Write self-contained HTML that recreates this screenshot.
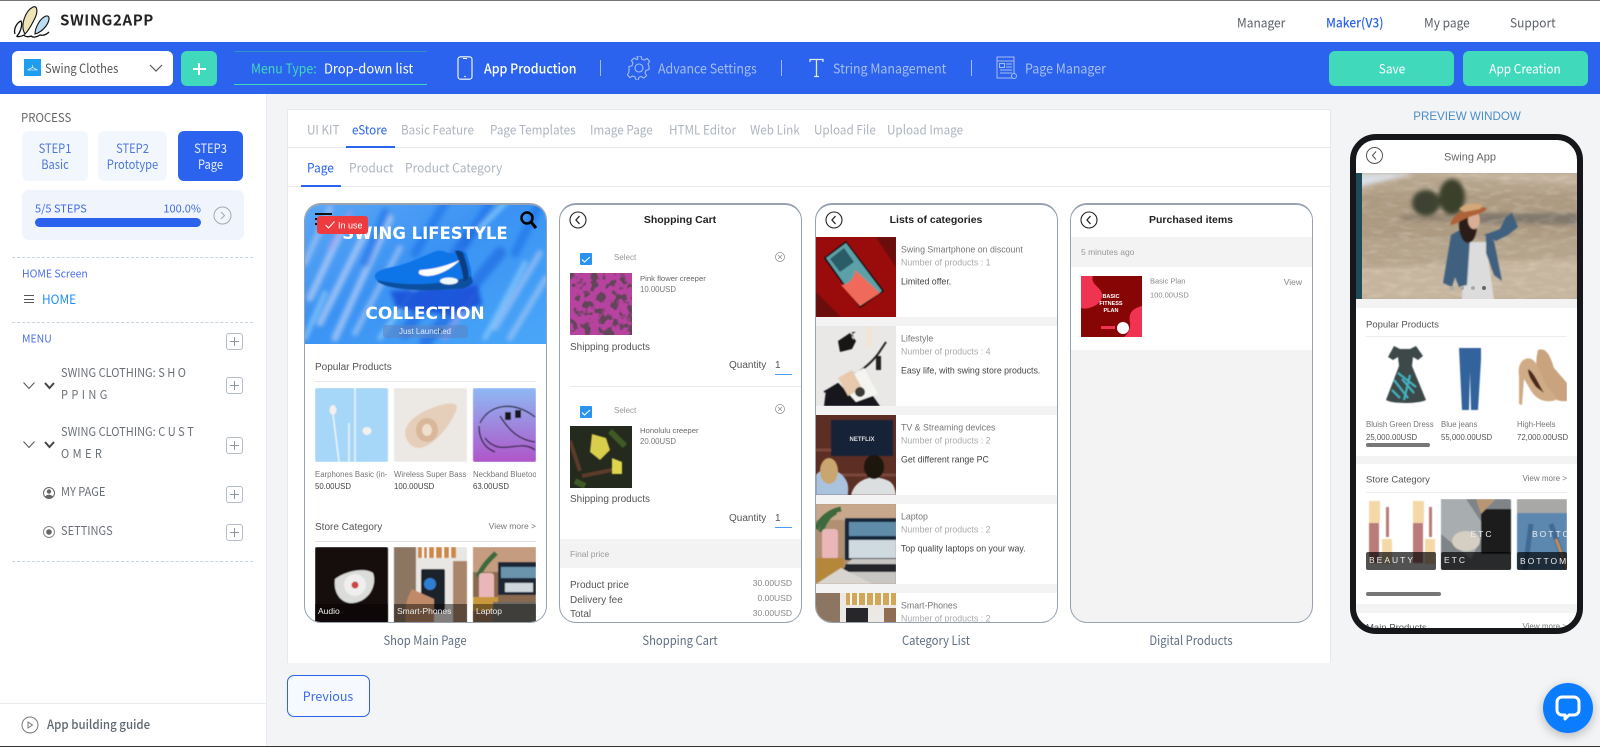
<!DOCTYPE html>
<html><head><meta charset="utf-8"><title>Swing2App</title>
<style>
*{box-sizing:border-box}
html,body{margin:0;padding:0;width:1600px;height:747px;overflow:hidden;background:#f3f4f6}
body{font-family:"Noto Sans CJK KR","Liberation Sans",sans-serif;position:relative}
.a{position:absolute}
.t{position:absolute;white-space:nowrap;transform:translateY(-50%);line-height:1}
.c{position:absolute;white-space:nowrap;transform:translate(-50%,-50%);line-height:1}
.r{position:absolute;white-space:nowrap;transform:translate(-100%,-50%);line-height:1}
.l{font-family:"Liberation Sans",sans-serif}
.sx{transform:translateY(-50%) scaleX(.91);transform-origin:0 50%}
.cx{transform:translate(-50%,-50%) scaleX(.91)}
.card{position:absolute;top:203px;height:420px;width:243px;border:1px solid #97a1b1;border-radius:17px;overflow:hidden;background:#fff;border-top-width:2px}
.in{position:absolute;top:-205px}
.plus{position:absolute;left:226px;width:17px;height:17px;border:1px solid #b4bcc8;border-radius:3px}
.plus:before{content:"";position:absolute;left:3px;right:3px;top:7px;height:1px;background:#8c96a3}
.plus:after{content:"";position:absolute;top:3px;bottom:3px;left:7px;width:1px;background:#8c96a3}
.side{font-size:12px;color:#6b7078;transform:translateY(-50%) scaleX(.92);transform-origin:0 50%}
.step{position:absolute;top:131px;height:50px;background:#f2f6fd;border-radius:6px;color:#4d78dc;font-size:12.5px;text-align:center;line-height:16px;padding-top:9px}
.step span{display:block;transform:scaleX(.89)}
.tab{font-size:13px;color:#aeb5c0;top:129px;transform:translateY(-50%) scaleX(.9);transform-origin:0 50%}
.tab2{font-size:13px;color:#aeb5c0;top:167px;transform:translateY(-50%) scaleX(.92);transform-origin:0 50%}
.nav{font-size:13px;color:#5b6068;top:22px;transform:translateY(-50%) scaleX(.92);transform-origin:0 50%}
.hn{font-size:13.5px;top:68px;color:#a6bdf0;transform:translateY(-50%) scaleX(.92);transform-origin:0 50%}
.cap{font-size:12.5px;color:#5f6f82;top:640px;transform:translate(-50%,-50%) scaleX(.9)}
</style></head><body>
<svg class="a" style="left:0;top:0" width="0" height="0">
<defs>
<filter id="s" x="-5%" y="-5%" width="110%" height="110%"><feGaussianBlur stdDeviation=".55"/></filter>
<filter id="b1" x="-10%" y="-10%" width="120%" height="120%"><feGaussianBlur stdDeviation="2.200"/></filter>
<filter id="b3"><feGaussianBlur stdDeviation="2"/></filter>
<filter id="b4"><feGaussianBlur stdDeviation=".7"/></filter>
<filter id="npink" x="0" y="0" width="100%" height="100%"><feTurbulence type="fractalNoise" baseFrequency=".14" numOctaves="2" seed="4"/><feColorMatrix values="0 0 0 0 .12  0 0 0 0 .06  0 0 0 0 .1  6 0 0 0 -2.900"/></filter>
<filter id="ngrass" x="0" y="0" width="100%" height="100%"><feTurbulence type="fractalNoise" baseFrequency=".07 .22" numOctaves="2" seed="7"/><feColorMatrix values="0 0 0 0 .9  0 0 0 0 .85  0 0 0 0 .77  2 0 0 0 -.9"/><feGaussianBlur stdDeviation=".6"/></filter>
<linearGradient id="h" x1="0" y1="0" x2="1" y2="1"><stop offset="0" stop-color="#5ba6f5"/><stop offset=".45" stop-color="#3b92f3"/><stop offset="1" stop-color="#49a7f8"/></linearGradient>
<linearGradient id="pp" x1="0" y1="0" x2="0" y2="1"><stop offset="0" stop-color="#8eb9f3"/><stop offset="1" stop-color="#b055c9"/></linearGradient>
</defs>
</svg>

<!-- top bar -->
<div class="a" style="left:0;top:0;width:1600px;height:42px;background:#fff;border-top:1px solid #777"></div>
<svg class="a" style="left:12px;top:4px" width="42" height="34" viewBox="0 0 42 34">
<path d="M13 30C8 22 13 7 21 3c5-2 5 6 1 13-3 6-7 12-9 14z" fill="#eee4b8" stroke="#111" stroke-width="1.100"/>
<path d="M23 30c0-6 5-16 11-18 5-1 3 6 0 10-3 4-7 7-11 8z" fill="#bcdcf2" stroke="#111" stroke-width="1.100"/>
<path d="M3 30c-2-6 3-12 6-13 2 4-1 12-4 15-1 1 4 1 7-1 1 2 5 2 7 1 2 2 6 1 9-1 4 1 7-1 9-3" fill="none" stroke="#111" stroke-width="1.300"/>
</svg>
<div class="t" style="left:60px;top:20px;font-size:15px;font-weight:700;color:#222;letter-spacing:.6px">SWING2APP</div>
<div class="t nav" style="left:1237px">Manager</div>
<div class="t nav" style="left:1326px;color:#2c63ee;font-weight:500">Maker(V3)</div>
<div class="t nav" style="left:1424px">My page</div>
<div class="t nav" style="left:1510px">Support</div>

<!-- blue bar -->
<div class="a" style="left:0;top:42px;width:1600px;height:52px;background:#2c63ee"></div>
<div class="a" style="left:12px;top:51px;width:161px;height:35px;background:#fff;border-radius:6px"></div>
<div class="a" style="left:24px;top:59px;width:17px;height:17px;background:#1f9df0"></div>
<svg class="a" style="left:27px;top:63px" width="11" height="8"><path d="M.500 7L5.500 4.500 10.500 7zM5.500 4.500V2" fill="none" stroke="#cfeafd" stroke-width=".8"/></svg>
<div class="t sx" style="left:45px;top:68px;font-size:12.500px;color:#555;transform:translateY(-50%) scaleX(.89)">Swing Clothes</div>
<svg class="a" style="left:149px;top:63px" width="14" height="10"><path d="M1 2l6 6 6-6" fill="none" stroke="#555" stroke-width="1.200"/></svg>
<div class="a" style="left:181px;top:51px;width:36px;height:35px;background:#41d9bb;border-radius:6px"></div>
<div class="a" style="left:193px;top:68px;width:13px;height:2px;background:#fff"></div>
<div class="a" style="left:198px;top:63px;width:2px;height:12px;background:#fff"></div>
<div class="a" style="left:234px;top:51px;width:193px;height:1px;background:#2f93c9"></div>
<div class="a" style="left:234px;top:84px;width:193px;height:1px;background:#41d9bb"></div>
<div class="t sx" style="left:251px;top:68px;font-size:13.500px;color:#41d9bb">Menu Type:</div>
<div class="t sx" style="left:324px;top:68px;font-size:13.500px;color:#fff;transform:translateY(-50%) scaleX(.96)">Drop-down list</div>
<svg class="a" style="left:457px;top:56px" width="16" height="24"><rect x="1" y=".8" width="14" height="22.400" rx="2.500" fill="none" stroke="#fff" stroke-width="1.100"/><path d="M6 2.500h4" stroke="#fff"/><circle cx="8" cy="20.500" r=".8" fill="#fff"/></svg>
<div class="t hn" style="left:484px;color:#fff;font-weight:500">App Production</div>
<div class="a" style="left:600px;top:60px;width:1px;height:16px;background:#a6bdf0"></div>
<svg class="a" style="left:627px;top:56px" width="24" height="24" viewBox="0 0 24 24"><path d="M10 1h4l.7 3 2.600 1.100 2.700-1.600 2.600 2.700-1.600 2.600L22 11.500v3l-3 .8-1 2.600 1.600 2.600-2.800 2.600-2.600-1.600-2.200.8-.9 2.700h-2l-1-3-2.600-1-2.600 1.600-2.600-2.700 1.600-2.600L2 14.500v-3l3-.7 1-2.600-1.500-2.600 2.600-2.600 2.600 1.500 1-.4z" transform="translate(0 -1)" fill="none" stroke="#a6bdf0" stroke-width="1.100"/><circle cx="12" cy="12" r="4" fill="none" stroke="#a6bdf0" stroke-width="1.100"/></svg>
<div class="t hn" style="left:658px">Advance Settings</div>
<div class="a" style="left:781px;top:60px;width:1px;height:16px;background:#a6bdf0"></div>
<svg class="a" style="left:809px;top:58px" width="15" height="20"><path d="M1 4V1.500h13V4M7.500 1.500V18M5 18.500h5" fill="none" stroke="#dfe7fb" stroke-width="1.300"/></svg>
<div class="t hn" style="left:833px">String Management</div>
<div class="a" style="left:971px;top:60px;width:1px;height:16px;background:#a6bdf0"></div>
<svg class="a" style="left:996px;top:56px" width="22" height="24"><path d="M1 1h17v21H1zM1 5h17" fill="none" stroke="#a6bdf0"/><rect x="3.500" y="7.500" width="5" height="4" fill="none" stroke="#a6bdf0"/><path d="M10 8h6M10 11h6M4 14h12M4 17h12" stroke="#a6bdf0"/><circle cx="18" cy="20" r="2.500" fill="#2c63ee" stroke="#a6bdf0"/></svg>
<div class="t hn" style="left:1025px">Page Manager</div>
<div class="a" style="left:1329px;top:51px;width:125px;height:35px;background:#41d9bb;border-radius:6px"></div>
<div class="c cx" style="left:1392px;top:68px;font-size:13px;color:#fff">Save</div>
<div class="a" style="left:1463px;top:51px;width:125px;height:35px;background:#41d9bb;border-radius:6px"></div>
<div class="c cx" style="left:1525px;top:68px;font-size:13px;color:#fff">App Creation</div>

<!-- sidebar -->
<div class="a" style="left:0;top:94px;width:267px;height:652px;background:#fff;border-right:1px solid #e9ebef"></div>
<div class="t" style="left:21px;top:118px;font-size:12px;color:#666;transform:translateY(-50%) scaleX(.95);transform-origin:0 50%">PROCESS</div>
<div class="step" style="left:22px;width:66px"><span>STEP1</span><span>Basic</span></div>
<div class="step" style="left:98px;width:69px"><span>STEP2</span><span>Prototype</span></div>
<div class="step" style="left:178px;width:65px;background:#2c63ee;color:#e8eefc"><span>STEP3</span><span>Page</span></div>
<div class="a" style="left:22px;top:190px;width:222px;height:50px;background:#f0f4fd;border-radius:7px"></div>
<div class="t" style="left:35px;top:209px;font-size:11px;color:#3f6be0">5/5 STEPS</div>
<div class="r" style="left:201px;top:209px;font-size:11px;color:#3f6be0">100.0%</div>
<div class="a" style="left:35px;top:218px;width:166px;height:9px;background:#2c63ee;border-radius:5px"></div>
<svg class="a" style="left:213px;top:206px" width="19" height="19"><circle cx="9.500" cy="9.500" r="8.500" fill="none" stroke="#a3a9b3"/><path d="M8 6l3.500 3.500L8 13" fill="none" stroke="#a3a9b3"/></svg>
<div class="a" style="left:12px;top:257px;width:241px;border-top:1px dashed #c8d3e6"></div>
<div class="t" style="left:22px;top:274px;font-size:11px;color:#4d6df0;transform:translateY(-50%) scaleX(.95);transform-origin:0 50%">HOME Screen</div>
<div class="a" style="left:24px;top:295px;width:10px;height:8px;border-top:1px solid #555;border-bottom:1px solid #555"></div>
<div class="a" style="left:24px;top:299px;width:10px;height:1px;background:#555"></div>
<div class="t" style="left:42px;top:299px;font-size:12.500px;color:#1e90ff;transform:translateY(-50%) scaleX(.95);transform-origin:0 50%">HOME</div>
<div class="a" style="left:12px;top:322px;width:241px;border-top:1px dashed #c8d3e6"></div>
<div class="t" style="left:22px;top:339px;font-size:11px;color:#4d6df0;transform:translateY(-50%) scaleX(.95);transform-origin:0 50%">MENU</div>
<div class="plus" style="top:333px"></div>
<div class="t side" style="left:61px;top:373px">SWING CLOTHING: S H O</div>
<div class="t side" style="left:61px;top:395px;letter-spacing:.5px">P P I N G</div>
<svg class="a" style="left:23px;top:381px" width="34" height="10"><path d="M.500 1.500l5.500 6 5.500-6" fill="none" stroke="#555"/><path d="M22 2l4.500 5 4.500-5" fill="none" stroke="#444" stroke-width="2"/></svg>
<div class="plus" style="top:377px"></div>
<div class="t side" style="left:61px;top:432px">SWING CLOTHING: C U S T</div>
<div class="t side" style="left:61px;top:454px;letter-spacing:.5px">O M E R</div>
<svg class="a" style="left:23px;top:440px" width="34" height="10"><path d="M.500 1.500l5.500 6 5.500-6" fill="none" stroke="#555"/><path d="M22 2l4.500 5 4.500-5" fill="none" stroke="#444" stroke-width="2"/></svg>
<div class="plus" style="top:437px"></div>
<svg class="a" style="left:43px;top:487px" width="12" height="12"><circle cx="6" cy="6" r="5.500" fill="#fff" stroke="#666"/><circle cx="6" cy="4.500" r="2.200" fill="#666"/><path d="M2 10c1-3 7-3 8 0-2 2-6 2-8 0z" fill="#666"/></svg>
<div class="t side" style="left:61px;top:492px">MY PAGE</div>
<div class="plus" style="top:486px"></div>
<svg class="a" style="left:43px;top:526px" width="12" height="12"><circle cx="6" cy="6" r="5.500" fill="#fff" stroke="#888"/><circle cx="6" cy="6" r="2.800" fill="#666"/></svg>
<div class="t side" style="left:61px;top:531px">SETTINGS</div>
<div class="plus" style="top:524px"></div>
<div class="a" style="left:12px;top:561px;width:241px;border-top:1px dashed #c8d3e6"></div>
<div class="a" style="left:0;top:703px;width:266px;height:1px;background:#e9ebef"></div>
<svg class="a" style="left:21px;top:716px" width="18" height="18"><circle cx="9" cy="9" r="8" fill="none" stroke="#777"/><path d="M7 6l4.500 3L7 12z" fill="none" stroke="#777"/></svg>
<div class="t" style="left:47px;top:724px;font-size:12.500px;font-weight:500;color:#5d6670;transform:translateY(-50%) scaleX(.92);transform-origin:0 50%">App building guide</div>

<!-- main panel -->
<div class="a" style="left:287px;top:109px;width:1044px;height:554px;background:#fff;border:1px solid #e6e8ec;border-bottom:0"></div>
<div class="a" style="left:288px;top:147px;width:1042px;height:1px;background:#e6e8ee"></div>
<div class="a" style="left:288px;top:186px;width:1042px;height:1px;background:#e6e8ee"></div>
<div class="t tab" style="left:307px">UI KIT</div>
<div class="t tab" style="left:352px;color:#2c63ee">eStore</div>
<div class="a" style="left:346px;top:146px;width:49px;height:2px;background:#2c63ee"></div>
<div class="t tab" style="left:401px">Basic Feature</div>
<div class="t tab" style="left:490px">Page Templates</div>
<div class="t tab" style="left:590px">Image Page</div>
<div class="t tab" style="left:669px">HTML Editor</div>
<div class="t tab" style="left:750px">Web Link</div>
<div class="t tab" style="left:814px">Upload File</div>
<div class="t tab" style="left:887px">Upload Image</div>
<div class="t tab2" style="left:307px;color:#2c63ee">Page</div>
<div class="a" style="left:301px;top:185px;width:40px;height:2px;background:#2c63ee"></div>
<div class="t tab2" style="left:349px">Product</div>
<div class="t tab2" style="left:405px">Product Category</div>

<!-- CARD 1 -->
<div class="card" style="left:304px;width:243px">
<div class="in l" style="left:-305px">
<svg class="a" style="left:305px;top:203px" width="241" height="141" viewBox="0 0 241 141">
<rect width="241" height="141" fill="url(#h)"/>
<g filter="url(#b1)" stroke-linecap="round" fill="none">
<path d="M5 95L40 20M15 120L60 30M30 135L85 15" stroke="#b6cff6" stroke-width="7" opacity=".7"/>
<path d="M0 60L25 5M50 130L95 45M190 125L235 50M205 135L241 75" stroke="#a0c3f5" stroke-width="6" opacity=".7"/>
<path d="M110 50L140 0M60 60L80 10M160 40L185 0M210 50L235 0" stroke="#1a6de8" stroke-width="9" opacity=".55"/>
<path d="M100 130L165 30M120 140L195 50" stroke="#1e68e2" stroke-width="12" opacity=".65"/>
<path d="M175 25L205 -5M180 135L220 60M75 135L110 85M0 135L20 90" stroke="#86c8fb" stroke-width="5" opacity=".8"/>
<path d="M25 45L45 10M140 135L170 90" stroke="#a69ce8" stroke-width="5" opacity=".6"/>
<path d="M85 88l88 -6 4 20-30 10-55-6z" fill="#1a52d8" stroke="none" opacity=".9"/>
</g>
<g filter="url(#s)">
<path d="M70 72c2-5 12-7 22-9 12-3 22-8 32-12 6-3 10-4 14-3 6 3 10 3 15 0 4-1 8 0 9 4 2 8 6 16 4 24-2 5-8 8-18 8-22 2-50 2-68-3-6-2-11-4-10-9z" fill="#0e74e8"/>
<path d="M72 77c25 6 65 6 94-4l2 6c-4 5-8 7-18 7-22 2-50 2-68-3-5-2-9-3-10-6z" fill="#0c4f9f"/>
<path d="M115 67c16-1 28-5 40-10-7 7-18 15-32 16-6 0-12-2-8-6z" fill="#fff"/>
<ellipse cx="144" cy="78" rx="9" ry="3.500" fill="#eef8ff"/>
<path d="M150 48c4-1 8 0 9 4 2 8 6 16 4 24l-4 3c-2-12-4-20-9-31z" fill="#0a3d80"/>
</g>
<rect x="78" y="122" width="85" height="13" rx="3" fill="#5b86c7" opacity=".6"/>
<circle cx="136" cy="128" r="2" fill="#0b3e8e"/>
<text x="120" y="36" text-anchor="middle" font-family="DejaVu Sans,sans-serif" font-weight="700" font-size="16.500" fill="#fff">SWING LIFESTYLE</text>
<text x="120" y="116" text-anchor="middle" font-family="DejaVu Sans,sans-serif" font-weight="700" font-size="17" fill="#fff">COLLECTION</text>
<text x="120" y="131" text-anchor="middle" font-family="Liberation Sans,sans-serif" font-size="8" fill="#dfe9fa">Just Launched</text>
<path d="M10 11h17M10 16h17M10 21h17" stroke="#111" stroke-width="2"/>
<circle cx="222" cy="15" r="5.500" fill="none" stroke="#000" stroke-width="2.500"/><path d="M226 19l5 6" stroke="#000" stroke-width="3"/>
</svg>
<div class="a" style="left:317px;top:216px;width:51px;height:18px;background:#ee3b3f;border-radius:3px"></div>
<svg class="a" style="left:325px;top:221px" width="10" height="8"><path d="M.500 4l3 3 6-6.500" fill="none" stroke="#fff"/></svg>
<div class="t" style="left:338px;top:226px;font-size:9px;color:#fff">In use</div>

<div class="t" style="left:315px;top:368px;font-size:10px;color:#555">Popular Products</div>
<div class="a" style="left:315px;top:381px;width:221px;height:1px;background:#e8e8e8"></div>
<svg class="a" style="left:315px;top:388px" width="221" height="74" viewBox="0 0 221 74">
<g filter="url(#s)">
<rect width="73" height="74" rx="2" fill="#a6d7f8"/>
<path d="M40 0v74M18 26l6 48M34 35v39" stroke="#eaf5fb" stroke-width="1.500" fill="none"/>
<ellipse cx="18" cy="22" rx="3.500" ry="5" fill="#f4f0ec"/><ellipse cx="52" cy="43" rx="4.500" ry="4" fill="#f4f0ec"/>
<rect x="79" width="73" height="74" rx="2" fill="#ece8e4"/>
<path d="M90 44c2-14 22-24 40-28 12-2 14 2 10 9-6 14-22 34-36 35-8 0-14-8-14-16z" fill="#e6cfba"/>
<ellipse cx="112" cy="42" rx="11" ry="12" fill="#d8b79a"/><ellipse cx="112" cy="42" rx="5" ry="6" fill="#f1dfce"/>
<rect x="158" width="63" height="74" rx="2" fill="url(#pp)"/>
<path d="M165 35c10-20 35-22 55-6M170 50c15 20 35 0 50 12M164 38c0 14 6 22 16 26M185 28c10 16 20 24 35 26" fill="none" stroke="#1c2030" stroke-width="1.300"/>
<rect x="190" y="24" width="6" height="8" fill="#16181f"/><rect x="200" y="22" width="6" height="8" fill="#16181f"/>
</g>
</svg>
<div class="t" style="left:315px;top:475px;font-size:7.800px;color:#777">Earphones Basic (in-</div>
<div class="t" style="left:394px;top:475px;font-size:7.800px;color:#777">Wireless Super Bass</div>
<div class="a" style="left:473px;top:470px;width:63px;height:10px;overflow:hidden"><div class="t" style="left:0;top:5px;font-size:7.800px;color:#777">Neckband Bluetooth</div></div>
<div class="t" style="left:315px;top:487px;font-size:7.800px;color:#444">50.00USD</div>
<div class="t" style="left:394px;top:487px;font-size:7.800px;color:#444">100.00USD</div>
<div class="t" style="left:473px;top:487px;font-size:7.800px;color:#444">63.00USD</div>
<div class="t" style="left:315px;top:528px;font-size:10px;color:#555">Store Category</div>
<div class="r" style="left:536px;top:526px;font-size:8.500px;color:#777">View more &gt;</div>
<div class="a" style="left:315px;top:541px;width:221px;height:1px;background:#e0e0e0"></div>
<svg class="a" style="left:315px;top:547px" width="221" height="76" viewBox="0 0 221 76">
<g filter="url(#s)">
<rect width="73" height="76" rx="2" fill="#12100e"/>
<path d="M20 32c10-8 30-12 38-6 4 10-2 28-20 30-12 1-20-10-18-24z" fill="#dcdcda"/>
<circle cx="40" cy="38" r="11" fill="#efefef"/><circle cx="40" cy="38" r="3.500" fill="#c44"/>
<rect x="79" width="73" height="76" rx="2" fill="#e9e7e3"/>
<rect x="79" width="22" height="76" fill="#8c7662"/><rect x="103" y="0" width="38" height="11" fill="#c84"/><path d="M108 0v11M113 0v11M120 0v11M128 0v11M135 0v11" stroke="#fff" stroke-width="2"/>
<rect x="106" y="22" width="24" height="44" rx="2" fill="#1d222c"/><circle cx="115" cy="37" r="6" fill="#2f7fd3"/><path d="M97 42c-6 10-8 22-6 34h28V52z" fill="#c08a68"/><rect x="138" y="14" width="14" height="62" fill="#a9866b"/>
<rect x="158" width="63" height="76" rx="2" fill="#8a6a50"/>
<rect x="158" y="0" width="63" height="25" fill="#c59c80"/>
<path d="M163 30c5-12 12-18 18-24" stroke="#3e6a3c" stroke-width="5"/>
<rect x="164" y="26" width="15" height="28" rx="3" fill="#e9b7b7"/>
<rect x="183" y="15" width="38" height="33" fill="#1b2636"/><rect x="186" y="20" width="35" height="11" fill="#6b93ac"/><rect x="190" y="36" width="28" height="9" fill="#cfd6dc"/>
<rect x="158" y="50" width="25" height="14" fill="#c9983c"/><rect x="178" y="55" width="43" height="21" fill="#6b6862"/>
</g>
<rect y="57" width="73" height="19" fill="#000" opacity=".4"/><rect x="79" y="57" width="73" height="19" fill="#000" opacity=".45"/><rect x="158" y="57" width="63" height="19" fill="#000" opacity=".4"/>
</svg>
<div class="t" style="left:318px;top:611px;font-size:8.500px;color:#eee">Audio</div>
<div class="t" style="left:397px;top:611px;font-size:8.500px;color:#eee">Smart-Phones</div>
<div class="t" style="left:476px;top:611px;font-size:8.500px;color:#eee">Laptop</div>
</div></div>

<!-- CARD 2 -->
<div class="card" style="left:559px">
<div class="in l" style="left:-560px">
<svg class="a" style="left:569px;top:211px" width="18" height="18"><circle cx="9" cy="9" r="8" fill="none" stroke="#222" stroke-width="1.100"/><path d="M10.500 5L7 9l3.500 4" fill="none" stroke="#222" stroke-width="1.300"/></svg>
<div class="c" style="left:680px;top:220px;font-size:10.500px;font-weight:700;color:#222">Shopping Cart</div>
<div class="a" style="left:580px;top:253px;width:12px;height:12px;background:#2a93f0;border-radius:1px"></div>
<svg class="a" style="left:581px;top:256px" width="10" height="7"><path d="M1 3.500l2.500 2.500L9 1" fill="none" stroke="#fff"/></svg>
<div class="t" style="left:614px;top:258px;font-size:8px;color:#999">Select</div>
<svg class="a" style="left:775px;top:252px" width="10" height="10"><circle cx="5" cy="5" r="4.500" fill="none" stroke="#888" stroke-width=".7"/><path d="M3 3l4 4M7 3l-4 4" stroke="#888" stroke-width=".7"/></svg>
<svg class="a" style="left:570px;top:273px" width="62" height="62" viewBox="0 0 62 62"><rect width="62" height="62" fill="#b8429f"/><rect width="62" height="62" filter="url(#npink)"/></svg>
<div class="t" style="left:640px;top:279px;font-size:7.700px;color:#666">Pink flower creeper</div>
<div class="t" style="left:640px;top:290px;font-size:7.800px;color:#777">10.00USD</div>
<div class="t" style="left:570px;top:348px;font-size:10px;color:#555">Shipping products</div>
<div class="t" style="left:729px;top:366px;font-size:10px;color:#555">Quantity</div>
<div class="t" style="left:775px;top:366px;font-size:10px;color:#555">1</div>
<div class="a" style="left:775px;top:374px;width:17px;height:1px;background:#4a9df0"></div>
<div class="a" style="left:570px;top:386px;width:232px;height:1px;background:#e8e8e8"></div>
<div class="a" style="left:580px;top:406px;width:12px;height:12px;background:#2a93f0;border-radius:1px"></div>
<svg class="a" style="left:581px;top:409px" width="10" height="7"><path d="M1 3.500l2.500 2.500L9 1" fill="none" stroke="#fff"/></svg>
<div class="t" style="left:614px;top:411px;font-size:8px;color:#999">Select</div>
<svg class="a" style="left:775px;top:404px" width="10" height="10"><circle cx="5" cy="5" r="4.500" fill="none" stroke="#888" stroke-width=".7"/><path d="M3 3l4 4M7 3l-4 4" stroke="#888" stroke-width=".7"/></svg>
<svg class="a" style="left:570px;top:426px" width="62" height="62" viewBox="0 0 62 62"><rect width="62" height="62" fill="#242a1d"/><g filter="url(#s)"><path d="M22 8l14 4 4 12-10 10-10-8z" fill="#d8ce4b"/><path d="M42 32l10 4 0 12-10 0z" fill="#dfd64e"/><path d="M0 15l10 30M12 50l30-6" stroke="#5b3a2a" stroke-width="4"/><path d="M40 5l15 15M5 55l10 5" stroke="#3f5a28" stroke-width="6"/></g></svg>
<div class="t" style="left:640px;top:431px;font-size:7.700px;color:#666">Honolulu creeper</div>
<div class="t" style="left:640px;top:442px;font-size:7.800px;color:#777">20.00USD</div>
<div class="t" style="left:570px;top:500px;font-size:10px;color:#555">Shipping products</div>
<div class="t" style="left:729px;top:519px;font-size:10px;color:#555">Quantity</div>
<div class="t" style="left:775px;top:519px;font-size:10px;color:#555">1</div>
<div class="a" style="left:775px;top:527px;width:17px;height:1px;background:#4a9df0"></div>
<div class="a" style="left:560px;top:539px;width:242px;height:29px;background:#f3f3f3"></div>
<div class="t" style="left:570px;top:554px;font-size:8.500px;color:#999">Final price</div>
<div class="t" style="left:570px;top:586px;font-size:10px;color:#555">Product price</div>
<div class="t" style="left:570px;top:601px;font-size:10px;color:#555">Delivery fee</div>
<div class="t" style="left:570px;top:615px;font-size:10px;color:#555">Total</div>
<div class="r" style="left:792px;top:583px;font-size:8.500px;color:#888">30.00USD</div>
<div class="r" style="left:792px;top:598px;font-size:8.500px;color:#888">0.00USD</div>
<div class="r" style="left:792px;top:613px;font-size:8.500px;color:#888">30.00USD</div>
</div></div>

<!-- CARD 3 -->
<div class="card" style="left:815px">
<div class="in l" style="left:-816px">
<svg class="a" style="left:825px;top:211px" width="18" height="18"><circle cx="9" cy="9" r="8" fill="none" stroke="#222" stroke-width="1.100"/><path d="M10.500 5L7 9l3.500 4" fill="none" stroke="#222" stroke-width="1.300"/></svg>
<div class="c" style="left:936px;top:220px;font-size:10.500px;font-weight:700;color:#222">Lists of categories</div>
<div class="a" style="left:816px;top:317px;width:241px;height:9px;background:#f3f3f3"></div>
<div class="a" style="left:816px;top:406px;width:241px;height:9px;background:#f3f3f3"></div>
<div class="a" style="left:816px;top:495px;width:241px;height:9px;background:#f3f3f3"></div>
<div class="a" style="left:816px;top:584px;width:241px;height:9px;background:#f3f3f3"></div>

<svg class="a" style="left:816px;top:237px" width="80" height="80" viewBox="0 0 80 80"><rect width="80" height="80" fill="#9a0c0c"/><g filter="url(#s)"><path d="M0 55L25 80H0zM60 0h20v30z" fill="#6a0808"/><path d="M8 21L30 4l38 50-24 17z" fill="#111"/><path d="M10 21L30 6l36 48-22 15z" fill="#5ba1a8"/><path d="M25 48c8 0 14-8 14-15l25 23-20 13z" fill="#ef6a5a"/><path d="M14 22l14-11 10 14-14 10z" fill="#2c5c68"/></g></svg>
<div class="t" style="left:901px;top:250px;font-size:8.800px;color:#777">Swing Smartphone on discount</div>
<div class="t" style="left:901px;top:263px;font-size:8.800px;color:#aaa">Number of products : 1</div>
<div class="t" style="left:901px;top:282px;font-size:8.800px;color:#444">Limited offer.</div>

<svg class="a" style="left:816px;top:326px" width="80" height="80" viewBox="0 0 80 80"><rect width="80" height="80" fill="#e9e8e6"/><g filter="url(#s)"><path d="M22 15l12-8 6 8-4 8-12 3zM40 6c-5 2-6 5-2 8l-2-8z" fill="#121212"/><rect x="50" y="1" width="7" height="20" fill="#f1e5d8"/><path d="M8 66c18-8 42-22 54-38l8-12" fill="none" stroke="#222" stroke-width="2"/><path d="M10 64l30-18 24 34H8z" fill="#17191a"/><path d="M22 56l26-14 14 26-22 8z" fill="#f4f4f0"/><path d="M22 52l14-8 10 18-14 8z" fill="#e7c9ad"/><circle cx="44" cy="66" r="5" fill="#3a3a38"/><rect x="60" y="30" width="5" height="14" fill="#222"/></g></svg>
<div class="t" style="left:901px;top:339px;font-size:8.800px;color:#777">Lifestyle</div>
<div class="t" style="left:901px;top:352px;font-size:8.800px;color:#aaa">Number of products : 4</div>
<div class="t" style="left:901px;top:371px;font-size:8.800px;color:#444">Easy life, with swing store products.</div>

<svg class="a" style="left:816px;top:415px" width="80" height="80" viewBox="0 0 80 80"><rect width="80" height="80" fill="#5d2f24"/><g filter="url(#s)"><rect x="15" y="5" width="62" height="36" fill="#142138"/><path d="M0 35h15M0 60h80" stroke="#7b463a" stroke-width="3"/><path d="M0 80V60c6-8 18-8 26 0 8 8 6 14 6 20z" fill="#a9c3df"/><ellipse cx="13" cy="56" rx="9" ry="13" fill="#c9a66f"/><path d="M35 80c4-16 22-22 38-14 5 3 6 8 7 14z" fill="#dcdfe0"/><ellipse cx="58" cy="52" rx="10" ry="12" fill="#1c1411"/></g><text x="46" y="26" text-anchor="middle" font-size="6" font-weight="700" fill="#ddd" font-family="Liberation Sans,sans-serif">NETFLIX</text></svg>
<div class="t" style="left:901px;top:428px;font-size:8.800px;color:#777">TV &amp; Streaming devices</div>
<div class="t" style="left:901px;top:441px;font-size:8.800px;color:#aaa">Number of products : 2</div>
<div class="t" style="left:901px;top:460px;font-size:8.800px;color:#444">Get different range PC</div>

<svg class="a" style="left:816px;top:504px" width="80" height="80" viewBox="0 0 80 80"><rect width="80" height="80" fill="#b08f72"/><g filter="url(#s)"><rect width="80" height="16" fill="#c7a88c"/><path d="M0 25c5-12 15-18 25-20M5 28C8 18 12 12 20 8" stroke="#3e6a3c" stroke-width="5" fill="none"/><rect x="6" y="25" width="16" height="30" rx="3" fill="#eab6b8"/><rect x="29" y="14" width="51" height="42" fill="#18263a"/><rect x="33" y="18" width="47" height="14" fill="#5e8ca8"/><rect x="33" y="36" width="47" height="18" fill="#cfd9e0"/><path d="M10 80L36 55h44v25z" fill="#c8c6c2"/><path d="M30 60h50v8H26z" fill="#24262a"/><rect x="0" y="54" width="28" height="26" fill="#b5873a"/><path d="M0 80l25-16 32 16z" fill="#d8d4cf"/></g></svg>
<div class="t" style="left:901px;top:517px;font-size:8.800px;color:#777">Laptop</div>
<div class="t" style="left:901px;top:530px;font-size:8.800px;color:#aaa">Number of products : 2</div>
<div class="t" style="left:901px;top:549px;font-size:8.800px;color:#444">Top quality laptops on your way.</div>

<svg class="a" style="left:816px;top:593px" width="80" height="30" viewBox="0 0 80 30"><rect width="80" height="30" fill="#ece9e4"/><rect width="24" height="30" fill="#8c7662"/><rect x="30" width="50" height="12" fill="#d2a75a"/><path d="M35 0v12M42 0v12M50 0v12M58 0v12M66 0v12M74 0v12" stroke="#f7f7f5" stroke-width="2"/><rect x="30" y="15" width="22" height="15" fill="#27272b"/><rect x="68" y="15" width="12" height="15" fill="#8f6d52"/></svg>
<div class="t" style="left:901px;top:606px;font-size:8.800px;color:#777">Smart-Phones</div>
<div class="t" style="left:901px;top:619px;font-size:8.800px;color:#aaa">Number of products : 2</div>
</div></div>

<!-- CARD 4 -->
<div class="card" style="left:1070px;background:#f3f3f3">
<div class="in l" style="left:-1071px">
<div class="a" style="left:1071px;top:205px;width:241px;height:32px;background:#fff"></div>
<div class="a" style="left:1071px;top:267px;width:241px;height:83px;background:#fff"></div>
<svg class="a" style="left:1080px;top:211px" width="18" height="18"><circle cx="9" cy="9" r="8" fill="none" stroke="#222" stroke-width="1.100"/><path d="M10.500 5L7 9l3.500 4" fill="none" stroke="#222" stroke-width="1.300"/></svg>
<div class="c" style="left:1191px;top:220px;font-size:10.500px;font-weight:700;color:#222">Purchased items</div>
<div class="t" style="left:1081px;top:252px;font-size:8.500px;color:#999">5 minutes ago</div>
<svg class="a" style="left:1081px;top:276px" width="61" height="61" viewBox="0 0 61 61"><rect width="61" height="61" fill="#870505"/><path d="M0 0h12c-4 10 14 12 8 24C17 30 6 34 0 32zM61 30c-8 2-14 6-12 16 1 6-2 12-6 15h18z" fill="#ef3350"/><rect x="20" y="50" width="14" height="3" fill="#ef3350"/><circle cx="42" cy="52" r="6" fill="#fff"/><text x="30" y="22" text-anchor="middle" font-size="5.500" font-weight="700" fill="#fff" font-family="Liberation Sans,sans-serif">BASIC</text><text x="30" y="29" text-anchor="middle" font-size="5.500" font-weight="700" fill="#fff" font-family="Liberation Sans,sans-serif">FITNESS</text><text x="30" y="36" text-anchor="middle" font-size="5.500" font-weight="700" fill="#fff" font-family="Liberation Sans,sans-serif">PLAN</text></svg>
<div class="t" style="left:1150px;top:281px;font-size:7.500px;color:#888">Basic Plan</div>
<div class="t" style="left:1150px;top:295px;font-size:7.500px;color:#888">100.00USD</div>
<div class="r" style="left:1302px;top:282px;font-size:8.500px;color:#888">View</div>
</div></div>

<div class="c cap" style="left:425px">Shop Main Page</div>
<div class="c cap" style="left:680px">Shopping Cart</div>
<div class="c cap" style="left:936px">Category List</div>
<div class="c cap" style="left:1191px">Digital Products</div>

<!-- previous -->
<div class="a" style="left:287px;top:675px;width:83px;height:42px;border:1px solid #2c63ee;border-radius:7px;background:#f6f9fe"></div>
<div class="c" style="left:328px;top:696px;font-size:12.500px;color:#3b6bea">Previous</div>

<!-- preview -->
<div class="c l" style="left:1467px;top:117px;font-size:11.600px;color:#4a8cc6;font-weight:500">PREVIEW WINDOW</div>
<div class="a" style="left:1350px;top:134px;width:233px;height:500px;background:#fff;border:6px solid #15171b;border-radius:26px;overflow:hidden">
<div class="a l" style="left:-1356px;top:-140px;width:1600px;height:747px">
<svg class="a" style="left:1366px;top:147px" width="17" height="17"><circle cx="8.500" cy="8.500" r="8" fill="none" stroke="#555"/><path d="M10 4.500L6.500 8.500l3.500 4" fill="none" stroke="#555"/></svg>
<div class="c" style="left:1470px;top:158px;font-size:11px;color:#666">Swing App</div>
<svg class="a" style="left:1356px;top:173px" width="222" height="127" viewBox="0 0 222 127">
<rect width="222" height="127" fill="#b5a48c"/>
<g filter="url(#b3)">
<path d="M0 0h222v12L60 2 0 15z" fill="#c6b5a0"/>
<path d="M0 0h60L0 15z" fill="#d8dde3"/>
<path d="M0 20h222v45H0z" fill="#ac9a81"/>
<path d="M100 40h122v12l-122-2z" fill="#6f6a64" opacity=".7"/>
<path d="M45 42h50v6H45z" fill="#807566" opacity=".6"/>
<path d="M0 95l222-10v42H0z" fill="#c6b59e"/>
</g>
<rect width="222" height="127" filter="url(#ngrass)" opacity=".3"/>
<g filter="url(#b3)"><ellipse cx="70" cy="30" rx="14" ry="13" fill="#3e4231"/><ellipse cx="96" cy="24" rx="13" ry="18" fill="#3a3f2c"/></g>
<rect x="0" width="6" height="127" fill="#1f4a58"/>
<g filter="url(#b4)">
<path d="M106 127l2-58h22l8 58z" fill="#dcdcdc"/>
<path d="M87 110l8-48 14-8 5 12-3 46-8 2-4-10-3 10zM130 60l8 8 8 40-8-6-8-22zM128 62l16-6 6-12 6-4 6 14-10 8-12 6z" fill="#40617f"/>
<ellipse cx="112" cy="52" rx="9" ry="18" fill="#2c1d17"/>
<ellipse cx="118" cy="47" rx="6" ry="9" fill="#d8ae94"/>
<path d="M94 52c3-13 20-20 37-17-2 6-12 6-20 10-6 2-12 7-17 7z" fill="#ad6237"/>
<path d="M103 36c6-6 16-7 24-4l-3 4-16 3z" fill="#d3a778"/>
</g>
<circle cx="96" cy="115" r="2" fill="#aaa"/><circle cx="106" cy="115" r="2" fill="#aaa"/><circle cx="117" cy="115" r="2" fill="#aaa"/><circle cx="128" cy="115" r="2" fill="#666"/>
</svg>
<div class="a" style="left:1356px;top:299px;width:222px;height:9px;background:#f3f3f3"></div>
<div class="t" style="left:1366px;top:325px;font-size:9.500px;color:#555">Popular Products</div>
<div class="a" style="left:1366px;top:336px;width:201px;height:1px;background:#eee"></div>
<svg class="a" style="left:1366px;top:345px" width="201" height="66" viewBox="0 0 201 66">
<g filter="url(#s)">
<path d="M22 12l6-11 6 3h10l6-3 7 10-5 4-5-3-1 9 14 34c-8 4-34 4-40 0l13-34-1-9-5 3z" fill="#3c4a4a"/>
<path d="M28 35l14 18M44 30l-6 25M32 28l18 14M26 45l8 8M48 48l-12-14" stroke="#3fb4c0" stroke-width="2"/>
<path d="M93 3h22v12l-3 50h-7l-1-38-1 38h-7z" fill="#33639d"/>
<path d="M172 5c8-3 12 5 16 18l13 15v18c-14 2-22-10-26-18-3-6-7-18-3-33z" fill="#c9a37e"/>
<path d="M156 16c6-5 12-3 16 6l8 18 12 14c-10 5-22 2-28-10l-6-10-2 26-3-1v-28c-1-6 0-11 3-15z" fill="#cfac86"/>
<path d="M162 24c6 3 10 14 16 24l-8-6c-4-6-8-11-8-18z" fill="#4b2c1e"/>
</g>
</svg>
<div class="t" style="left:1366px;top:425px;font-size:7.800px;color:#777">Bluish Green Dress</div>
<div class="t" style="left:1441px;top:425px;font-size:7.800px;color:#777">Blue jeans</div>
<div class="t" style="left:1517px;top:425px;font-size:7.800px;color:#777">High-Heels</div>
<div class="t" style="left:1366px;top:438px;font-size:7.800px;color:#555">25,000.00USD</div>
<div class="t" style="left:1441px;top:438px;font-size:7.800px;color:#555">55,000.00USD</div>
<div class="t" style="left:1517px;top:438px;font-size:7.800px;color:#555">72,000.00USD</div>
<div class="a" style="left:1366px;top:443px;width:64px;height:4px;background:#777;border-radius:2px"></div>
<div class="a" style="left:1356px;top:456px;width:222px;height:8px;background:#f3f3f3"></div>
<div class="t" style="left:1366px;top:480px;font-size:9.500px;color:#555">Store Category</div>
<div class="r" style="left:1567px;top:479px;font-size:8px;color:#777">View more &gt;</div>
<div class="a" style="left:1366px;top:492px;width:201px;height:1px;background:#eee"></div>
<svg class="a" style="left:1366px;top:499px" width="201" height="71" viewBox="0 0 201 71">
<g filter="url(#s)">
<rect x="3" y="2" width="11" height="22" fill="#f4d9a7"/><rect x="3" y="24" width="10" height="40" fill="#b97c78"/><rect x="20" y="8" width="3" height="30" fill="#b97c78"/><rect x="16" y="40" width="10" height="25" fill="#f4d9a7"/>
<rect x="47" y="2" width="11" height="22" fill="#f4d9a7"/><rect x="47" y="24" width="10" height="40" fill="#b97c78"/><rect x="63" y="8" width="3" height="30" fill="#b97c78"/><rect x="59" y="40" width="10" height="25" fill="#f4d9a7"/>
<rect x="75" width="70" height="71" rx="2" fill="#7e8488"/>
<path d="M75 0h25l20 30-15 30-30-25z" fill="#a8adb0"/><path d="M115 10h30v45h-30z" fill="#1c1b1a"/><path d="M110 0h20l-15 15z" fill="#b89674"/><ellipse cx="100" cy="42" rx="14" ry="10" fill="#d5cec2"/>
<rect x="151" width="50" height="71" rx="2" fill="#5c88b0"/>
<rect x="151" width="50" height="14" fill="#a8a8a6"/><path d="M165 25l-6 46M185 25l16 46" stroke="#3f6a94" stroke-width="5"/><path d="M190 40l11 30" stroke="#c08b55" stroke-width="3"/>
</g>
<rect x="0" y="53" width="70" height="18" rx="2" fill="#000" opacity=".68"/><rect x="75" y="53" width="70" height="18" rx="2" fill="#000" opacity=".68"/><rect x="151" y="53" width="50" height="18" rx="2" fill="#000" opacity=".68"/>
</svg>
<div class="c" style="left:1482px;top:534px;font-size:8.500px;color:#eee;letter-spacing:2px">ETC</div>
<div class="a" style="left:1517px;top:528px;width:50px;height:12px;overflow:hidden"><div class="t" style="left:15px;top:6px;font-size:8.500px;color:#eee;letter-spacing:2px">BOTTOM</div></div>
<div class="t" style="left:1369px;top:560px;font-size:8.500px;color:#eee;letter-spacing:2px">BEAUTY</div>
<div class="t" style="left:1444px;top:560px;font-size:8.500px;color:#eee;letter-spacing:2px">ETC</div>
<div class="a" style="left:1517px;top:552px;width:50px;height:18px;overflow:hidden"><div class="t" style="left:3px;top:9px;font-size:8.500px;color:#eee;letter-spacing:2px">BOTTOM</div></div>
<div class="a" style="left:1366px;top:592px;width:75px;height:3.500px;background:#777;border-radius:2px"></div>
<div class="a" style="left:1356px;top:604px;width:222px;height:9px;background:#f3f3f3"></div>
<div class="t" style="left:1366px;top:628px;font-size:9.500px;color:#555">Main Products</div>
<div class="r" style="left:1567px;top:627px;font-size:8px;color:#777">View more &gt;</div>
</div></div>

<!-- chat -->
<div class="a" style="left:1543px;top:683px;width:50px;height:50px;border-radius:50%;background:#0a7cff;box-shadow:0 3px 10px rgba(0,0,0,.25)"></div>
<svg class="a" style="left:1555px;top:695px" width="26" height="27" viewBox="0 0 26 27"><path d="M7 2h12a5 5 0 0 1 5 5v8a5 5 0 0 1-5 5h-5l-4 4v-4H7a5 5 0 0 1-5-5V7a5 5 0 0 1 5-5z" fill="#0a7cff" stroke="#fff" stroke-width="3" stroke-linejoin="round"/></svg>

<!-- bottom edge -->
<div class="a" style="left:0;top:746px;width:1600px;height:1px;background:#333"></div>
</body></html>
